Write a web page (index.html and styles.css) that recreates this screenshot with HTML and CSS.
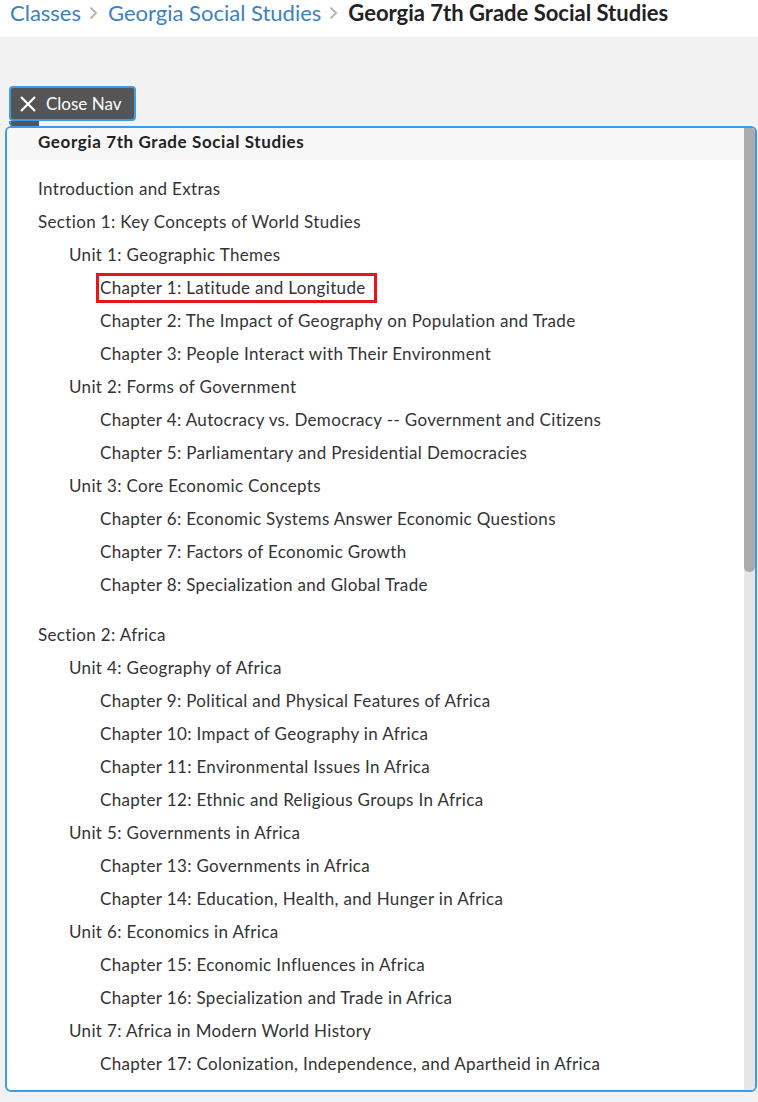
FILE: index.html
```html
<html>
<head>
    <link rel="stylesheet" href="styles.css">
</head>
<body>
    <div class="breadcrumb">
        <a class="crumb" href="#">Classes</a>
        <svg class="sep" width="9" height="14" viewBox="0 0 9 14">
            <polyline points="1.5,1.5 7,7 1.5,12.5" stroke="#b5b5b5" stroke-width="2" fill="none"/>
        </svg>
        <a class="crumb" href="#">Georgia Social Studies</a>
        <svg class="sep" width="9" height="14" viewBox="0 0 9 14">
            <polyline points="1.5,1.5 7,7 1.5,12.5" stroke="#b5b5b5" stroke-width="2" fill="none"/>
        </svg>
        <span class="crumb-current">Georgia 7th Grade Social Studies</span>
    </div>

    <div class="nav-area">
        <button class="close-btn">
            <svg class="close-icon" width="18" height="18" viewBox="0 0 18 18">
                <path d="M2 2 L16 16 M16 2 L2 16" stroke="#fff" stroke-width="2.2" fill="none"/>
            </svg>
            Close Nav
        </button>
        <div class="tab"></div>

        <div class="panel">
            <div class="panel-content">
                <div class="panel-header">Georgia 7th Grade Social Studies</div>
                <ul class="toc">
                    <li class="lvl0">Introduction and Extras</li>
                    <li class="lvl0">Section 1: Key Concepts of World Studies</li>
                    <li class="lvl1">Unit 1: Geographic Themes</li>
                    <li class="lvl2"><span class="selected">Chapter 1: Latitude and Longitude</span></li>
                    <li class="lvl2">Chapter 2: The Impact of Geography on Population and Trade</li>
                    <li class="lvl2">Chapter 3: People Interact with Their Environment</li>
                    <li class="lvl1">Unit 2: Forms of Government</li>
                    <li class="lvl2">Chapter 4: Autocracy vs. Democracy -- Government and Citizens</li>
                    <li class="lvl2">Chapter 5: Parliamentary and Presidential Democracies</li>
                    <li class="lvl1">Unit 3: Core Economic Concepts</li>
                    <li class="lvl2">Chapter 6: Economic Systems Answer Economic Questions</li>
                    <li class="lvl2">Chapter 7: Factors of Economic Growth</li>
                    <li class="lvl2">Chapter 8: Specialization and Global Trade</li>
                    <li class="lvl0 section-gap">Section 2: Africa</li>
                    <li class="lvl1">Unit 4: Geography of Africa</li>
                    <li class="lvl2">Chapter 9: Political and Physical Features of Africa</li>
                    <li class="lvl2">Chapter 10: Impact of Geography in Africa</li>
                    <li class="lvl2">Chapter 11: Environmental Issues In Africa</li>
                    <li class="lvl2">Chapter 12: Ethnic and Religious Groups In Africa</li>
                    <li class="lvl1">Unit 5: Governments in Africa</li>
                    <li class="lvl2">Chapter 13: Governments in Africa</li>
                    <li class="lvl2">Chapter 14: Education, Health, and Hunger in Africa</li>
                    <li class="lvl1">Unit 6: Economics in Africa</li>
                    <li class="lvl2">Chapter 15: Economic Influences in Africa</li>
                    <li class="lvl2">Chapter 16: Specialization and Trade in Africa</li>
                    <li class="lvl1">Unit 7: Africa in Modern World History</li>
                    <li class="lvl2">Chapter 17: Colonization, Independence, and Apartheid in Africa</li>
                </ul>
            </div>
            <div class="scrollbar">
                <div class="thumb"></div>
            </div>
        </div>
    </div>
</body>
</html>
```

FILE: styles.css
```css
/* Pagina */
body {
    margin: 0;
    background-color: #f2f2f2;
    font-family: "Lato", "Noto Sans", sans-serif;
    color: #333;
}

/* Migas de pan */
.breadcrumb {
    background-color: #fff;
    height: 37px;
    padding-left: 10px;
    display: flex;
    align-items: center;
    font-size: 22px;
    font-family: "Lato", sans-serif;
    padding-bottom: 13px;
    box-sizing: border-box;
}

.crumb {
    color: #3b82c4;
    text-decoration: none;
}

.sep {
    margin: 2px 10px 0 8px;
}

.crumb-current {
    color: #222;
    font-weight: bold;
}

/* Zona de navegacion */
.nav-area {
    padding-top: 49px;
}

.close-btn {
    margin-left: 9px;
    width: 127px;
    height: 35px;
    background-color: #555;
    border: 2px solid #3d9be9;
    border-radius: 4px;
    color: #fff;
    font-family: "Lato", sans-serif;
    font-size: 17px;
    display: flex;
    align-items: center;
    padding: 0 0 0 8px;
    gap: 9px;
    cursor: pointer;
}

.tab {
    margin-left: 9px;
    width: 28px;
    height: 5px;
    background-color: #555;
    border-left: 2px solid #3d9be9;
    border-radius: 0 0 0 3px;
}

/* Panel */
.panel {
    margin-left: 5px;
    margin-right: 1px;
    height: 962px;
    border: 2px solid #3d9be9;
    border-radius: 6px;
    background-color: #fff;
    display: flex;
    overflow: hidden;
}

.panel-content {
    flex: 1;
}

.panel-header {
    background-color: #f7f7f7;
    height: 32px;
    line-height: 28px;
    padding-left: 31px;
    font-weight: bold;
    font-size: 17px;
    letter-spacing: 0.6px;
    color: #222;
}

.toc {
    list-style: none;
    margin: 0;
    padding: 12px 0 0 0;
}

.toc li {
    height: 33px;
    display: flex;
    align-items: center;
    font-size: 17px;
    letter-spacing: 0.35px;
    color: #333;
    white-space: nowrap;
}

.lvl0 {
    padding-left: 31px;
}

.lvl1 {
    padding-left: 62px;
}

.lvl2 {
    padding-left: 93px;
}

.section-gap {
    margin-top: 17px;
}

.selected {
    border: 3px solid #e8141b;
    line-height: 24px;
    padding: 0 8px 0 1px;
    margin-left: -4px;
}

/* Barra de desplazamiento */
.scrollbar {
    width: 11px;
    background-color: #e6e6e6;
}

.thumb {
    height: 444px;
    background-color: #ababab;
    border-radius: 0 4px 5px 5px;
}
```
